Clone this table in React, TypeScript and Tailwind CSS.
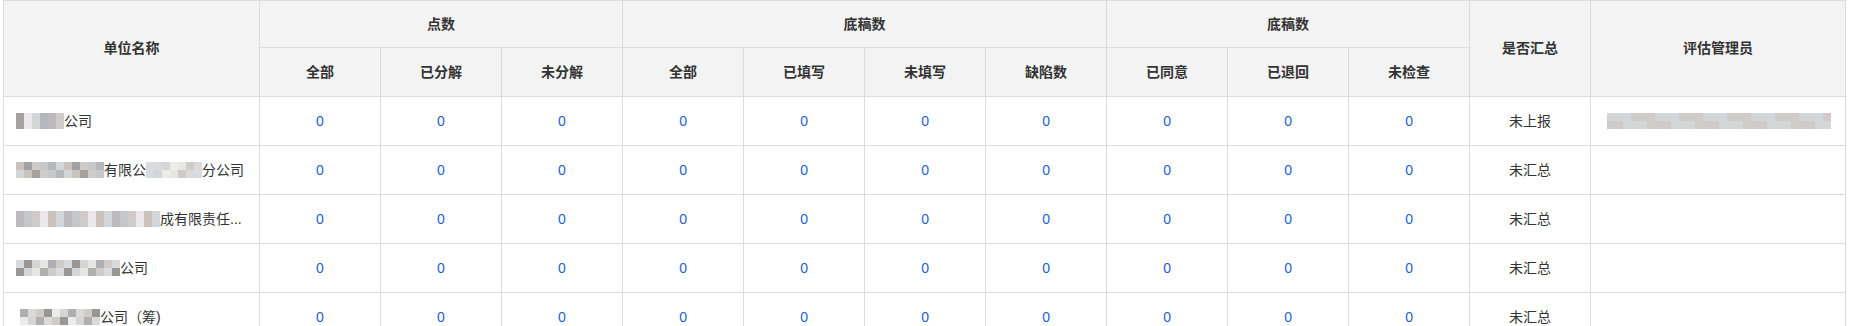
import React from "react"

const GRAYS = ["#c9c6c4", "#d8d6d8", "#a9a6a8", "#bfc3c6", "#e4e4e0", "#9b9897", "#b8b2b6", "#cfd2d2", "#ecebe6", "#8f8c8a", "#c4bdb5", "#d5d9dc", "#aeb0b6", "#e8e6ea"]

function Mosaic({ cols, rows = 2, seed = 1 }: { cols: number; rows?: number; seed?: number }) {
  const cells: string[] = []
  for (let i = 0; i < cols * rows; i++) {
    cells.push(GRAYS[(i * 7 + seed * 5 + (i % 3) * seed) % GRAYS.length])
  }
  return (
    <span className="inline-grid align-middle opacity-90" style={{ gridTemplateColumns: `repeat(${cols}, 8px)` }}>
      {cells.map((c, i) => (
        <span key={i} className="block h-2 w-2" style={{ backgroundColor: c }} />
      ))}
    </span>
  )
}

type Row = { name: React.ReactNode; status: string; admin?: boolean }

const rows: Row[] = [
  { name: <><Mosaic cols={6} seed={1} /><span>公司</span></>, status: "未上报", admin: true },
  {
    name: (
      <>
        <Mosaic cols={11} seed={2} />
        <span>有限公</span>
        <Mosaic cols={7} seed={3} />
        <span>分公司</span>
      </>
    ),
    status: "未汇总",
  },
  { name: <><Mosaic cols={18} seed={4} /><span>成有限责任...</span></>, status: "未汇总" },
  { name: <><Mosaic cols={13} seed={5} /><span>公司</span></>, status: "未汇总" },
  { name: <><span className="w-1" /><Mosaic cols={10} seed={6} /><span>公司（筹)</span></>, status: "未汇总" },
]

const sub1 = ["全部", "已分解", "未分解"]
const sub2 = ["全部", "已填写", "未填写", "缺陷数"]
const sub3 = ["已同意", "已退回", "未检查"]

export default function App() {
  const th = "border border-[#dcdcdc] bg-[#f3f3f3] font-bold text-[#333] text-center"
  const td = "border border-[#dcdcdc] text-center h-[49px] p-0"
  return (
    <div className="min-h-screen bg-white pl-[3px] pr-[16px] font-['Liberation_Sans','Noto_Sans_CJK_SC',sans-serif] text-[14px] text-[#333]">
      <table className="table-fixed border-collapse w-[1843px] border-t-0">
        <colgroup>
          <col className="w-[256px]" />
          {Array.from({ length: 11 }).map((_, i) => (
            <col key={i} className="w-[121px]" />
          ))}
          <col className="w-[255px]" />
        </colgroup>
        <thead>
          <tr className="h-[47px]">
            <th rowSpan={2} className={th}>单位名称</th>
            <th colSpan={3} className={th}>点数</th>
            <th colSpan={4} className={th}>底稿数</th>
            <th colSpan={3} className={th}>底稿数</th>
            <th rowSpan={2} className={th}>是否汇总</th>
            <th rowSpan={2} className={th}>评估管理员</th>
          </tr>
          <tr className="h-[49px]">
            {[...sub1, ...sub2, ...sub3].map((s, i) => (
              <th key={i} className={th}>{s}</th>
            ))}
          </tr>
        </thead>
        <tbody>
          {rows.map((r, i) => (
            <tr key={i}>
              <td className="border border-[#dcdcdc] h-[49px] px-3 text-left">
                <div className="flex items-center whitespace-nowrap overflow-hidden">{r.name}</div>
              </td>
              {Array.from({ length: 10 }).map((_, j) => (
                <td key={j} className={`${td} text-[#1d5fd4]`}>0</td>
              ))}
              <td className={td}>{r.status}</td>
              <td className="border border-[#dcdcdc] h-[49px] pl-[16px]">
                {r.admin && (
                  <div className="flex items-center">
                    <Mosaic cols={28} seed={7} />
                  </div>
                )}
              </td>
            </tr>
          ))}
        </tbody>
      </table>
    </div>
  )
}
